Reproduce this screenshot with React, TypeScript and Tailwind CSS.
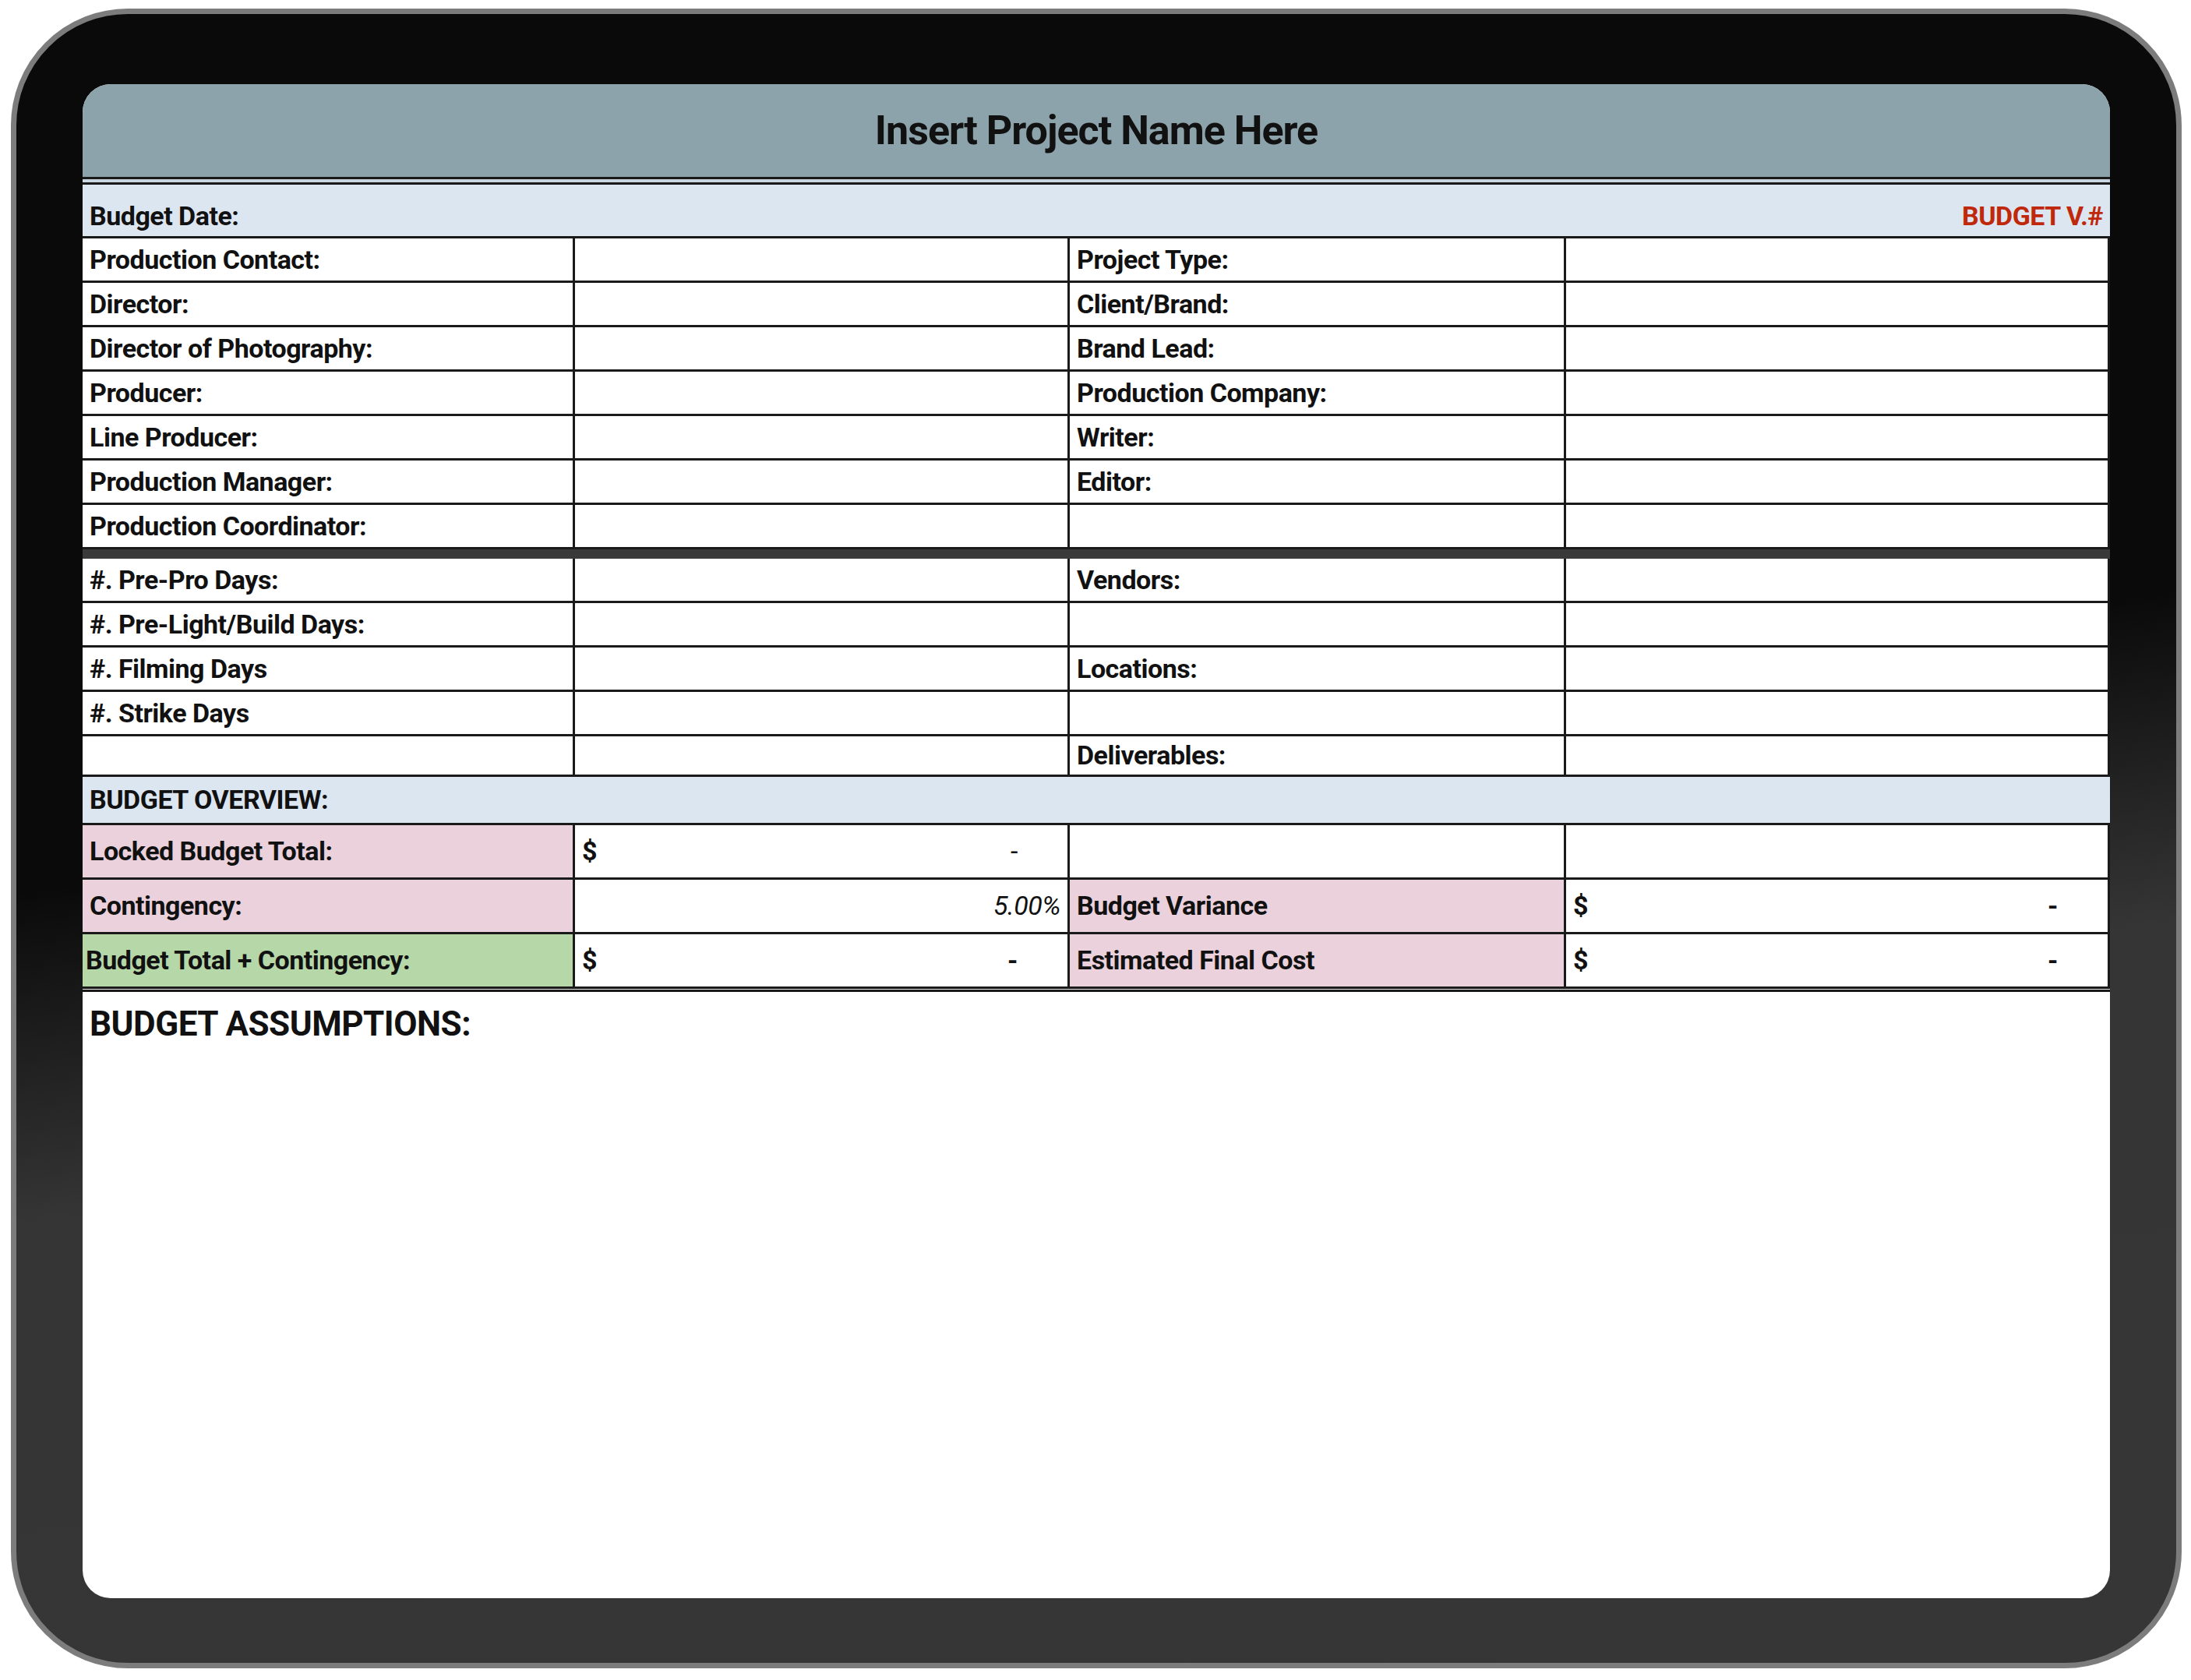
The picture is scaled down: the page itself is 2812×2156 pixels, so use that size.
import React from "react";

const cols = "grid grid-cols-[632px_635px_637px_698px]";
const cell = "border-r-[3px] border-b-[3px] border-[#1a1a1a] flex items-center px-[9px] font-bold text-[34px] tracking-[-0.5px] text-[#111] overflow-hidden whitespace-nowrap";

function Row({ cells, h, bgs = [] }: { cells: React.ReactNode[]; h: string; bgs?: string[] }) {
  return (
    <div className={`${cols} ${h}`}>
      {cells.map((c, i) => (
        <div key={i} className={`${cell} ${bgs[i] || "bg-white"} ${i === 3 ? "border-r-0" : ""}`}>{c}</div>
      ))}
    </div>
  );
}

export default function App() {
  const top = [
    ["Production Contact:", "Project Type:"],
    ["Director:", "Client/Brand:"],
    ["Director of Photography:", "Brand Lead:"],
    ["Producer:", "Production Company:"],
    ["Line Producer:", "Writer:"],
    ["Production Manager:", "Editor:"],
    ["Production Coordinator:", ""],
  ];
  const mid = [
    ["#. Pre-Pro Days:", "Vendors:"],
    ["#. Pre-Light/Build Days:", ""],
    ["#. Filming Days", "Locations:"],
    ["#. Strike Days", ""],
  ];
  return (
    <div className="w-[2812px] h-[2156px] bg-white pt-[11px] pl-[14px]" style={{ fontFamily: "Roboto, 'Liberation Sans', sans-serif" }}>
      <div className="w-[2786px] h-[2130px] rounded-[150px] border-[7px] border-[#7c7c7c] bg-[linear-gradient(172deg,#0a0a0a_0%,#0a0a0a_45%,#353535_62%,#363636_100%)] pt-[90px] pl-[85px]">
        <div className="w-[2602px] h-[1943px] bg-white rounded-[36px] overflow-hidden flex flex-col">
          <div className="h-[119px] bg-[#8ca3ab] flex items-center justify-center text-[52px] font-bold tracking-[-1px] text-[#111]">
            Insert Project Name Here
          </div>
          <div className="h-[3px] bg-[#1a1a1a]" />
          <div className="h-[4px] bg-[#c9d5df]" />
          <div className="h-[72px] bg-[#dce6f1] border-y-[3px] border-[#1a1a1a] flex items-center justify-between px-[9px] pt-[14px] font-bold text-[34px] tracking-[-0.5px] text-[#111]">
            <span>Budget Date:</span>
            <span className="text-[#c0280b]">BUDGET V.#</span>
          </div>
          {top.map(([a, b], i) => (
            <Row key={i} h="h-[57px]" cells={[a, "", b, ""]} />
          ))}
          <div className="h-[12px] bg-[#3a3a3a]" />
          {mid.map(([a, b], i) => (
            <Row key={i} h="h-[57px]" cells={[a, "", b, ""]} />
          ))}
          <Row h="h-[52px]" cells={["", "", "Deliverables:", ""]} />
          <div className="h-[62px] bg-[#dce6f1] border-b-[3px] border-[#1a1a1a] flex items-center px-[9px] font-bold text-[34px] tracking-[-0.5px] text-[#111]">
            BUDGET OVERVIEW:
          </div>
          <Row
            h="h-[70px]"
            bgs={["bg-[#ead1dc]"]}
            cells={[
              "Locked Budget Total:",
              <div className="flex w-full justify-between pr-[55px]"><span>$</span><span className="font-normal">-</span></div>,
              "",
              "",
            ]}
          />
          <Row
            h="h-[70px]"
            bgs={["bg-[#ead1dc]", "", "bg-[#ead1dc]"]}
            cells={[
              "Contingency:",
              <div className="w-full text-right font-normal italic pr-0">5.00%</div>,
              "Budget Variance",
              <div className="flex w-full justify-between pr-[55px]"><span>$</span><span>-</span></div>,
            ]}
          />
          <Row
            h="h-[70px]"
            bgs={["bg-[#b6d7a8] !px-[4px]", "", "bg-[#ead1dc]"]}
            cells={[
              "Budget Total + Contingency:",
              <div className="flex w-full justify-between pr-[55px]"><span>$</span><span>-</span></div>,
              "Estimated Final Cost",
              <div className="flex w-full justify-between pr-[55px]"><span>$</span><span>-</span></div>,
            ]}
          />
          <div className="h-[4px] bg-[#e5e5e5] border-b-[3px] border-[#1a1a1a]" />
          <div className="px-[9px] pt-[8px] font-bold text-[44px] tracking-[-0.5px] text-[#111]">BUDGET ASSUMPTIONS:</div>
        </div>
      </div>
    </div>
  );
}
